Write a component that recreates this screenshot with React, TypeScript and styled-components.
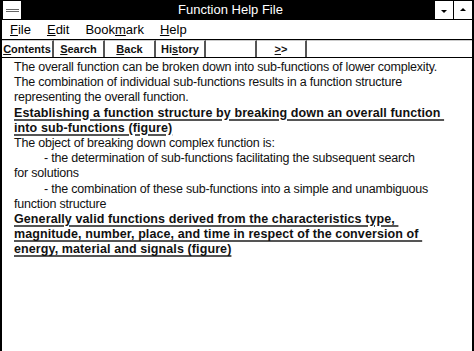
import React from "react";
import styled, { createGlobalStyle } from "styled-components";

const GlobalStyle = createGlobalStyle`
  html, body {
    margin: 0;
    padding: 0;
    background: #ffffff;
  }
  body {
    font-family: "Liberation Sans", Arial, sans-serif;
  }
`;

const menuItems = [
  { before: "", key: "F", after: "ile" },
  { before: "", key: "E", after: "dit" },
  { before: "Book", key: "m", after: "ark" },
  { before: "", key: "H", after: "elp" },
];

const buttons = [
  { before: "", key: "C", after: "ontents", w: 52 },
  { before: "", key: "S", after: "earch", w: 51 },
  { before: "", key: "B", after: "ack", w: 51 },
  { before: "Hi", key: "s", after: "tory", w: 50 },
  { before: "", key: "", after: "", w: 51 },
  { before: "", key: ">", after: ">", w: 50 },
];

type Line = { text: string; kind?: "link" | "indent" };

const lines: Line[] = [
  { text: "The overall function can be broken down into sub-functions of lower complexity." },
  { text: "The combination of individual sub-functions results in a function structure" },
  { text: "representing the overall function." },
  { text: "Establishing a function structure by breaking down an overall function ", kind: "link" },
  { text: "into sub-functions (figure)", kind: "link" },
  { text: "The object of breaking down complex function is:" },
  { text: "- the determination of sub-functions facilitating the subsequent search", kind: "indent" },
  { text: "for solutions" },
  { text: "- the combination of these sub-functions into a simple and unambiguous", kind: "indent" },
  { text: "function structure" },
  { text: "Generally valid functions derived from the characteristics type, ", kind: "link" },
  { text: "magnitude, number, place, and time in respect of the conversion of ", kind: "link" },
  { text: "energy, material and signals (figure)", kind: "link" },
];

export default function App() {
  return (
    <>
      <GlobalStyle />
      <Window>
        <TitleBar>
          <SystemBox>
            <SystemDash />
          </SystemBox>
          <Title>Function Help File</Title>
          <SizeBox>
            <Arrow $dir="down" />
          </SizeBox>
          <SizeBox>
            <Arrow $dir="up" />
          </SizeBox>
        </TitleBar>

        <MenuBar>
          {menuItems.map((m, i) => (
            <MenuItem key={i}>
              {m.before}
              <u>{m.key}</u>
              {m.after}
            </MenuItem>
          ))}
        </MenuBar>

        <ButtonBar>
          {buttons.map((b, i) => (
            <ToolButton key={i} $w={b.w}>
              {b.before}
              {b.key && <u>{b.key}</u>}
              {b.after}
            </ToolButton>
          ))}
          <ButtonFill />
        </ButtonBar>

        <Content>
          {lines.map((l, i) =>
            l.kind === "link" ? (
              <LinkLine key={i}>{l.text}</LinkLine>
            ) : (
              <TextLine key={i} $indent={l.kind === "indent"}>
                {l.text}
              </TextLine>
            )
          )}
        </Content>
      </Window>
    </>
  );
}

const Window = styled.div`
  width: 474px;
  height: 351px;
  box-sizing: border-box;
  border-left: 2px solid #000;
  border-right: 2px solid #000;
  display: flex;
  flex-direction: column;
  background: #fff;
  overflow: hidden;
`;

const TitleBar = styled.div`
  height: 20px;
  background: #000;
  display: flex;
  align-items: stretch;
  margin: 0 -2px;
`;

const SystemBox = styled.div`
  width: 18px;
  margin: 1px 0 1px 3px;
  background: #fff;
  display: flex;
  align-items: center;
  justify-content: center;
`;

const SystemDash = styled.div`
  width: 13px;
  height: 3px;
  border: 1px solid #666;
  border-left: none;
  border-right: none;
  box-sizing: border-box;
  background: #fff;
`;

const Title = styled.div`
  flex: 1;
  color: #fff;
  font-size: 13px;
  text-align: center;
  line-height: 20px;
  padding-left: 6px;
`;

const SizeBox = styled.div`
  width: 18px;
  margin: 1px 0 1px 1px;
  background: #fff;
  display: flex;
  align-items: center;
  justify-content: center;

  &:last-child {
    margin-right: 2px;
  }
`;

const Arrow = styled.div<{ $dir: "up" | "down" }>`
  width: 0;
  height: 0;
  border-left: 3px solid transparent;
  border-right: 3px solid transparent;
  ${(p) =>
    p.$dir === "down"
      ? "border-top: 3px solid #000; margin-top: 2px;"
      : "border-bottom: 3px solid #000; margin-top: -2px;"}
`;

const MenuBar = styled.div`
  height: 19px;
  display: flex;
  align-items: center;
  gap: 16px;
  padding-left: 8px;
  border-bottom: 1px solid #000;
  font-size: 13px;
  color: #000;
`;

const MenuItem = styled.span`
  u {
    text-decoration: underline;
  }
`;

const ButtonBar = styled.div`
  height: 17px;
  display: flex;
  align-items: stretch;
  border-bottom: 1px solid #000;
`;

const ToolButton = styled.div<{ $w: number }>`
  width: ${(p) => p.$w}px;
  box-sizing: border-box;
  border-right: 2px solid #555;
  border-top: 1px solid #ccc;
  font-size: 11px;
  font-weight: bold;
  color: #111;
  display: flex;
  align-items: center;
  justify-content: center;
`;

const ButtonFill = styled.div`
  flex: 1;
  border-top: 1px solid #ccc;
`;

const Content = styled.div`
  flex: 1;
  padding: 2px 0 0 12px;
  font-size: 12.5px;
  line-height: 15.2px;
  color: #111;
  white-space: pre;
`;

const TextLine = styled.div<{ $indent?: boolean }>`
  padding-left: ${(p) => (p.$indent ? "30px" : "0")};
  letter-spacing: -0.2px;
`;

const LinkLine = styled.div`
  font-weight: bold;
  letter-spacing: 0.1px;
  text-decoration: underline;
  text-decoration-thickness: 2px;
  text-decoration-color: #555;
  text-underline-offset: 2px;
`;
